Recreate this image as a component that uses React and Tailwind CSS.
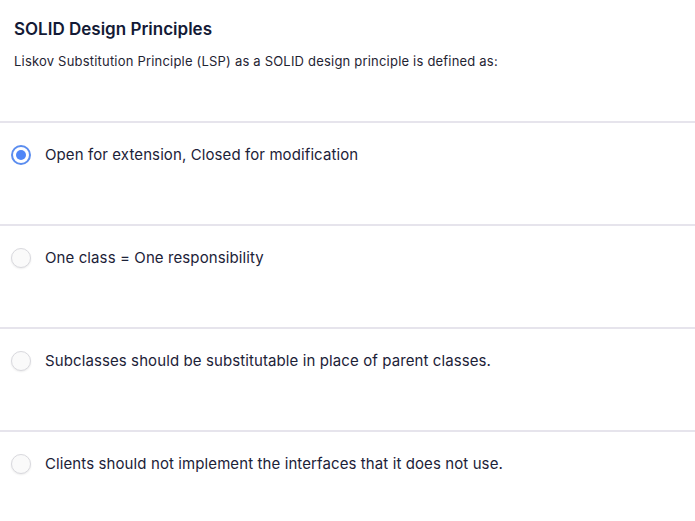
export default function App() {
  const options = [
    { text: "Open for extension, Closed for modification", selected: true },
    { text: "One class = One responsibility" },
    { text: "Subclasses should be substitutable in place of parent classes." },
    { text: "Clients should not implement the interfaces that it does not use." },
  ];
  return (
    <div className="w-[695px] h-[521px] bg-white overflow-hidden text-[#1c2035]" style={{ fontFamily: "Inter, 'Noto Sans', sans-serif" }}>
      <div className="px-[14px] pt-[18px] pb-[52px]">
        <h1 className="text-[17px] font-semibold leading-[22px] text-[#131a36]">SOLID Design Principles</h1>
        <p className="mt-[13px] text-[13px] tracking-[0.2px] leading-[16px] text-[#1f2433]">
          Liskov Substitution Principle (LSP) as a SOLID design principle is defined as:
        </p>
      </div>
      {options.map((o, i) => (
        <div key={i} className="border-t-2 border-[#e6e4ec] pt-[22px] pb-[59px]">
          <label className="flex items-center gap-[14px] pl-[11px]">
            {o.selected ? (
              <span className="w-[20px] h-[20px] rounded-full border-2 border-[#5b8def] bg-white flex items-center justify-center">
                <span className="w-[10px] h-[10px] rounded-full bg-[#4f86f7]" />
              </span>
            ) : (
              <span className="w-[20px] h-[20px] rounded-full border border-[#d9d9de] bg-[#fafafa] shadow-[0_1px_2px_rgba(0,0,0,0.08)]" />
            )}
            <span className="text-[15px] tracking-[0.1px] leading-[20px] text-[#1c2238]">{o.text}</span>
          </label>
        </div>
      ))}
    </div>
  );
}
